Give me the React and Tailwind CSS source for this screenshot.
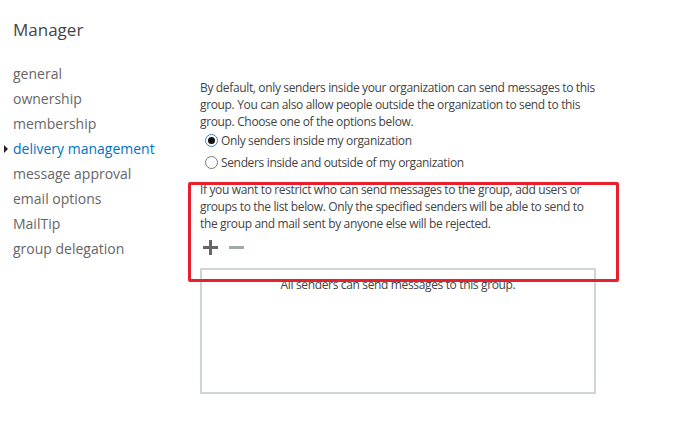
import React from 'react';

const navItems = [
    'general',
    'ownership',
    'membership',
    'delivery management',
    'message approval',
    'email options',
    'MailTip',
    'group delegation',
];

const Radio = ({ checked, label }) => (
    <label className="flex items-center h-[22px] pl-[5px] gap-[3px]">
        <span
            className={
                'w-[13px] h-[13px] rounded-full border flex items-center justify-center bg-white ' +
                (checked ? 'border-[#2b88d8]' : 'border-[#777]')
            }
        >
            {checked && <span className="w-[7px] h-[7px] rounded-full bg-[#111]" />}
        </span>
        <span>{label}</span>
    </label>
);

const App = () => {
    return (
        <div
            className="relative w-[696px] h-[445px] bg-white overflow-hidden flex text-[#444]"
            style={{ fontFamily: '"Open Sans", "Liberation Sans", sans-serif' }}
        >
            {/* Sidebar */}
            <div className="w-[200px] shrink-0 pt-[18px]">
                <div className="pl-[13px] text-[17px] text-[#444] leading-[24px]">Manager</div>
                <ul className="mt-[19px] text-[14px] leading-[25px]">
                    {navItems.map((item) => {
                        const active = item === 'delivery management';
                        return (
                            <li key={item} className="relative pl-[13px]">
                                {active && (
                                    <span className="absolute left-[4px] top-[9px] w-0 h-0 border-y-[4px] border-y-transparent border-l-[4px] border-l-[#222]" />
                                )}
                                <span className={active ? 'text-[#0072c6]' : 'text-[#666]'}>{item}</span>
                            </li>
                        );
                    })}
                </ul>
            </div>

            {/* Main content */}
            <div className="w-[420px] pt-[79px] text-[12px] leading-[17px] tracking-[-0.35px] whitespace-nowrap text-[#444]">
                <p>
                    By default, only senders inside your organization can send messages to this
                    <br />
                    group. You can also allow people outside the organization to send to this
                    <br />
                    group. Choose one of the options below.
                </p>
                <div className="mt-[-1px]">
                    <Radio checked label="Only senders inside my organization" />
                    <Radio label="Senders inside and outside of my organization" />
                </div>
                <p className="mt-[8px]">
                    If you want to restrict who can send messages to the group, add users or
                    <br />
                    groups to the list below. Only the specified senders will be able to send to
                    <br />
                    the group and mail sent by anyone else will be rejected.
                </p>
                <div className="flex items-center gap-[11px] h-[22px] mt-[4px] pl-[3px]">
                    <svg width="15" height="15" viewBox="0 0 15 15">
                        <rect x="6" y="0" width="3" height="15" fill="#666" />
                        <rect x="0" y="6" width="15" height="3" fill="#666" />
                    </svg>
                    <svg width="15" height="15" viewBox="0 0 15 15">
                        <rect x="0" y="6" width="15" height="3" fill="#a0aaaa" />
                    </svg>
                </div>
                <div className="mt-[10px] w-[396px] h-[126px] border-2 border-[#cfd4d7] text-center pt-[6px] text-[#444]">
                    All senders can send messages to this group.
                </div>
            </div>

            {/* Red highlight annotation */}
            <div className="absolute left-[188px] top-[182px] w-[431px] h-[100px] border-[3px] border-[#e8202e] rounded-[2px] pointer-events-none" />
        </div>
    );
};

export default App;
